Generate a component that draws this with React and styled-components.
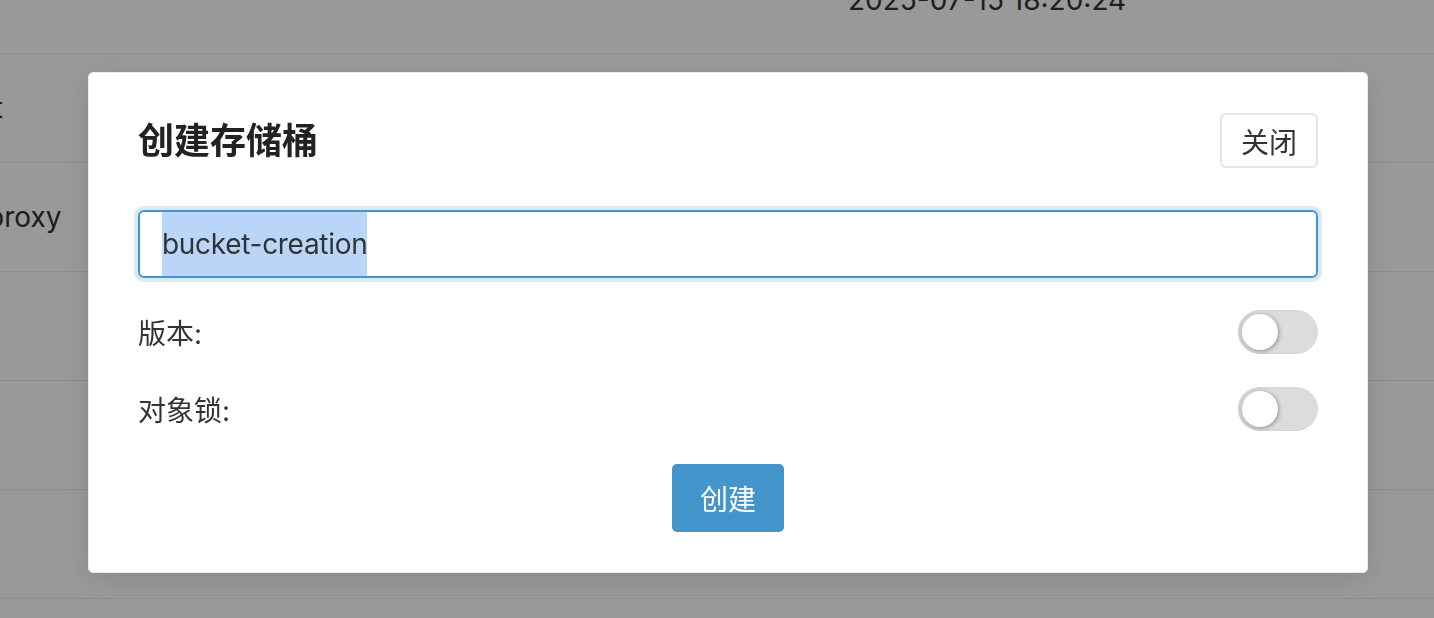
import React from 'react';
import styled, { createGlobalStyle } from 'styled-components';

const GlobalStyle = createGlobalStyle`
  html, body {
    margin: 0;
    padding: 0;
    overflow: hidden;
    background: #fff;
  }
  body {
    font-family: Inter, "Noto Sans CJK SC", sans-serif;
    color: #333;
  }
`;

const Page = styled.div`
  width: 1434px;
  height: 618px;
  overflow: hidden;
  background: #fff;
`;

const Table = styled.div`
  margin-top: -53px;
  margin-left: -13px;
`;

const Row = styled.div`
  display: grid;
  grid-template-columns: 861px 1fr;
  align-items: center;
  height: 108px;
  border-bottom: 1px solid #ececec;
  font-size: 28px;
  color: #333;

  &:first-child {
    height: 106px;
  }
`;

const Cell = styled.div`
  white-space: nowrap;
`;

const Overlay = styled.div`
  position: fixed;
  inset: 0;
  background: rgba(0, 0, 0, 0.4);
`;

const Modal = styled.div`
  position: fixed;
  left: 88px;
  top: 72px;
  width: 1280px;
  box-sizing: border-box;
  background: #fff;
  border: 1px solid #e9e9f0;
  border-radius: 5px;
  box-shadow: 0 6px 30px rgba(0, 0, 0, 0.12);
  padding: 40px 49px 40px;
  display: flex;
  flex-direction: column;
`;

const Header = styled.div`
  display: flex;
  align-items: center;
  justify-content: space-between;
  height: 55px;
`;

const Title = styled.h2`
  margin: 0;
  font-size: 36px;
  font-weight: 700;
  color: #222;
  line-height: 1;
`;

const CloseButton = styled.button`
  height: 55px;
  padding: 0 19px;
  font-family: inherit;
  font-size: 28px;
  color: #333;
  background: #fff;
  border: 2px solid #e3e3e8;
  border-radius: 6px;
`;

const Field = styled.div`
  margin-top: 42px;
  height: 68px;
  box-sizing: border-box;
  display: flex;
  align-items: stretch;
  border: 2px solid #4395cc;
  border-radius: 6px;
  box-shadow: 0 0 0 4px #d9e9f5;
  padding: 0 22px;
  font-size: 28px;
  letter-spacing: -0.3px;
  color: #333;
`;

const Selected = styled.span`
  display: flex;
  align-items: center;
  background: #b9d6f9;
`;

const OptionRow = styled.div`
  display: flex;
  align-items: center;
  justify-content: space-between;
  height: 44px;
  margin-top: ${(p) => p.$gap}px;
  font-size: 28px;
  color: #333;
`;

const Track = styled.span`
  position: relative;
  width: 80px;
  height: 44px;
  border-radius: 22px;
  background: #dcdcdc;
  box-shadow: inset 2px 0 3px rgba(0, 0, 0, 0.08);
`;

const Knob = styled.span`
  position: absolute;
  left: 4px;
  top: 4px;
  width: 36px;
  height: 36px;
  border-radius: 50%;
  background: #fff;
  box-shadow: 1px 1px 4px rgba(0, 0, 0, 0.35);
`;

const Footer = styled.div`
  display: flex;
  justify-content: center;
  margin-top: 33px;
`;

const PrimaryButton = styled.button`
  width: 112px;
  height: 68px;
  font-family: inherit;
  font-size: 28px;
  color: #fff;
  background: #4395cc;
  border: none;
  border-radius: 5px;
`;

function Toggle() {
  return (
    <Track>
      <Knob />
    </Track>
  );
}

export default function App() {
  return (
    <>
      <GlobalStyle />
      <Page>
        <Table>
          <Row>
            <Cell />
            <Cell>2025-07-15 18:20:24</Cell>
          </Row>
          <Row>
            <Cell>it</Cell>
            <Cell />
          </Row>
          <Row>
            <Cell>proxy</Cell>
            <Cell />
          </Row>
          <Row>
            <Cell />
            <Cell />
          </Row>
          <Row>
            <Cell />
            <Cell />
          </Row>
          <Row>
            <Cell />
            <Cell />
          </Row>
        </Table>
      </Page>
      <Overlay />
      <Modal>
        <Header>
          <Title>创建存储桶</Title>
          <CloseButton>关闭</CloseButton>
        </Header>
        <Field>
          <Selected>bucket-creation</Selected>
        </Field>
        <OptionRow $gap={32}>
          <span>版本:</span>
          <Toggle />
        </OptionRow>
        <OptionRow $gap={33}>
          <span>对象锁:</span>
          <Toggle />
        </OptionRow>
        <Footer>
          <PrimaryButton>创建</PrimaryButton>
        </Footer>
      </Modal>
    </>
  );
}
